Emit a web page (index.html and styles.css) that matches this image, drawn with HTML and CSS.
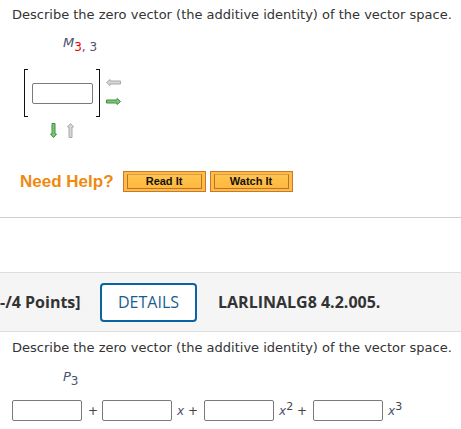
FILE: index.html
```html
<!DOCTYPE html>
<html>
<head>
<meta charset="utf-8">
<link rel="stylesheet" href="styles.css">
</head>
<body>
<div class="q1">
  <p class="prompt">Describe the zero vector (the additive identity) of the vector space.</p>
  <div class="space"><i class="var">M</i><sub><span class="red">3</span>, 3</sub></div>
  <div class="matrix-row">
    <div class="matrix">
      <span class="box mbox"></span>
    </div>
    <div class="harrows">
      <svg class="harrow" width="15" height="7" viewBox="0 0 15 7"><path d="M0.5 3.5 L4 0.5 L4 2 L14.5 2 L14.5 5 L4 5 L4 6.5 Z" fill="#d8d8d8" stroke="#a8a8a8" stroke-width="1"/></svg>
      <svg class="harrow" width="15" height="7" viewBox="0 0 15 7"><path d="M14.5 3.5 L11 0.5 L11 2 L0.5 2 L0.5 5 L11 5 L11 6.5 Z" fill="#7cc67c" stroke="#3e8e3e" stroke-width="1"/></svg>
    </div>
  </div>
  <div class="varrows">
    <svg width="7" height="15" viewBox="0 0 7 15"><path d="M3.5 14.5 L0.5 11 L2 11 L2 0.5 L5 0.5 L5 11 L6.5 11 Z" fill="#7cc67c" stroke="#3e8e3e" stroke-width="1"/></svg>
    <svg width="7" height="15" viewBox="0 0 7 15"><path d="M3.5 0.5 L0.5 4 L2 4 L2 14.5 L5 14.5 L5 4 L6.5 4 Z" fill="#d8d8d8" stroke="#a8a8a8" stroke-width="1"/></svg>
  </div>
  <div class="help">
    <span class="help-label">Need Help?</span>
    <span class="hbtn"><span class="hbtn-in">Read It</span></span>
    <span class="hbtn"><span class="hbtn-in">Watch It</span></span>
  </div>
</div>
<div class="sep"></div>
<div class="bar">
  <span class="points">-/4 Points]</span>
  <span class="details">DETAILS</span>
  <span class="code">LARLINALG8 4.2.005.</span>
</div>
<div class="q2">
  <p class="prompt">Describe the zero vector (the additive identity) of the vector space.</p>
  <div class="space"><i class="var">P</i><sub>3</sub></div>
  <div class="poly">
    <span class="box pbox"></span>
    <span class="op">+</span>
    <span class="box pbox"></span>
    <span class="term"><i>x</i> +</span>
    <span class="box pbox"></span>
    <span class="term"><i>x</i><sup>2</sup> +</span>
    <span class="box pbox"></span>
    <span class="term"><i>x</i><sup>3</sup></span>
  </div>
</div>
</body>
</html>
```
FILE: styles.css
```css
html, body {
  margin: 0;
  padding: 0;
  background: #fff;
}
body {
  font-family: "DejaVu Sans", Verdana, sans-serif;
  font-size: 13px;
  color: #333;
  width: 461px;
  overflow: hidden;
}
.prompt {
  margin: 0;
  padding-left: 12px;
  line-height: 16px;
  white-space: nowrap;
}
.q1 {
  padding-top: 7px;
}
.space {
  padding-left: 63px;
  margin-top: 12px;
  line-height: 16px;
  color: #4a5270;
}
.space .var {
  font-style: italic;
}
.space sub {
  font-size: 12px;
  line-height: 0;
  vertical-align: -4px;
}
.red {
  color: #e00;
}
.matrix-row {
  display: flex;
  align-items: flex-start;
  margin-top: 18px;
  padding-left: 24px;
}
.matrix {
  position: relative;
  display: flex;
  align-items: center;
  height: 48px;
  padding: 0 7px 0 8px;
}
.matrix::before,
.matrix::after {
  content: "";
  position: absolute;
  top: 0;
  bottom: 0;
  width: 3px;
  border-top: 1px solid #111;
  border-bottom: 1px solid #111;
}
.matrix::before {
  left: 0;
  border-left: 1px solid #111;
}
.matrix::after {
  right: 0;
  border-right: 1px solid #111;
}
.box {
  display: inline-block;
  box-sizing: border-box;
  border: 1px solid #7a7a7a;
  border-radius: 2px;
  background: #fff;
  flex: none;
}
.mbox {
  width: 61px;
  height: 21px;
  margin-top: 1px;
}
.harrows {
  display: flex;
  flex-direction: column;
  gap: 12px;
  margin-left: 6px;
  padding-top: 10px;
}
.harrow {
  display: block;
}
.varrows {
  display: flex;
  gap: 10px;
  padding-left: 50px;
  margin-top: 6px;
  height: 15px;
}
.varrows svg {
  display: block;
}
.help {
  display: flex;
  align-items: center;
  margin-top: 33px;
  padding-left: 20px;
  height: 21px;
}
.help-label {
  font-family: "Liberation Sans", Arial, sans-serif;
  font-weight: bold;
  font-size: 17px;
  color: #ee8a10;
  margin-right: 9px;
}
.hbtn {
  display: inline-block;
  box-sizing: border-box;
  width: 83px;
  height: 21px;
  border: 1px solid #c67a2c;
  background: #ffbb44;
  padding: 2px 3px;
  margin-right: 4px;
}
.hbtn-in {
  display: block;
  box-sizing: border-box;
  height: 15px;
  border: 1px solid #b7742e;
  border-top-color: #e09a48;
  background: linear-gradient(#ffc450, #ffb83e);
  font-family: "Liberation Sans", Arial, sans-serif;
  font-weight: bold;
  font-size: 11px;
  line-height: 13px;
  color: #111;
  text-align: center;
}
.sep {
  margin-top: 25px;
  border-top: 1px solid #cfcfcf;
  height: 54px;
}
.bar {
  display: flex;
  align-items: center;
  height: 58px;
  background: #f5f5f5;
  border-top: 1px solid #dedede;
  border-bottom: 1px solid #dedede;
  font-family: "Open Sans", sans-serif;
  white-space: nowrap;
}
.points {
  box-sizing: border-box;
  width: 100px;
  font-weight: bold;
  font-size: 16px;
  color: #333;
}
.details {
  box-sizing: border-box;
  width: 97px;
  height: 39px;
  border: 2px solid #0a64a0;
  border-radius: 4px;
  background: #fff;
  color: #1a5d8f;
  font-size: 16px;
  line-height: 35px;
  text-align: center;
}
.code {
  margin-left: 21px;
  font-weight: bold;
  font-size: 16px;
  color: #333;
}
.q2 {
  padding-top: 8px;
}
.q2 .space {
  margin-top: 13px;
}
.poly {
  display: flex;
  align-items: center;
  margin-top: 15px;
  padding-left: 12px;
  height: 21px;
  color: #444;
}
.pbox {
  width: 70px;
  height: 21px;
}
.op {
  margin: 0 4px 0 6px;
  font-size: 12px;
}
.term {
  margin: 0 6px 0 5px;
  font-size: 12px;
}
.term sup {
  font-size: 11px;
  line-height: 0;
  vertical-align: 5px;
}
.term i {
  color: #4a5270;
}
```
